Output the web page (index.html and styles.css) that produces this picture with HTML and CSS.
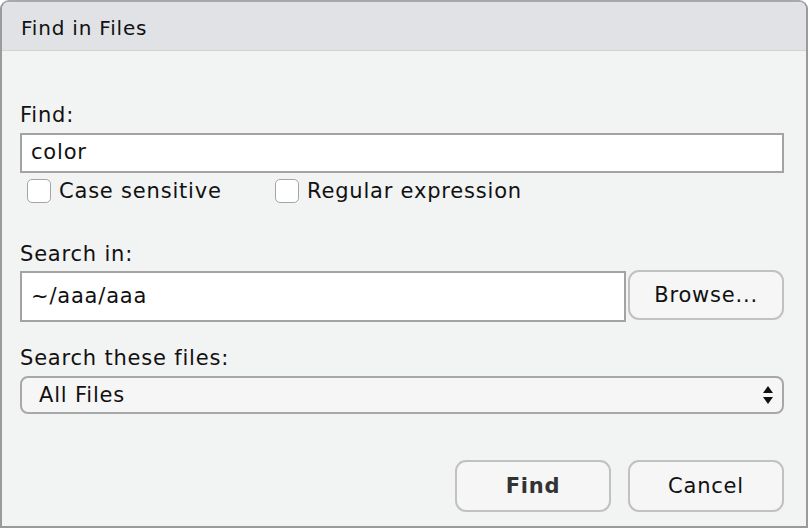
FILE: index.html
```html
<!DOCTYPE html>
<html lang="en">
<head>
  <meta charset="UTF-8" />
  <title>Find in Files</title>
  <link rel="stylesheet" href="styles.css">
</head>
<body>
  <div class="dialog">
    <div class="titlebar">Find in Files</div>
    <div class="content">
      <div class="label">Find:</div>
      <div class="field find-field">color</div>
      <div class="checks">
        <label class="check check-case"><span class="box"></span>Case sensitive</label>
        <label class="check"><span class="box"></span>Regular expression</label>
      </div>

      <div class="label label-search">Search in:</div>
      <div class="search-row">
        <div class="field path-field">~/aaa/aaa</div>
        <button class="btn browse">Browse...</button>
      </div>

      <div class="label label-files">Search these files:</div>
      <div class="select">
        <span>All Files</span>
        <svg class="arrows" width="12" height="22" viewBox="0 0 12 22">
          <path d="M6 2 L11 9 L1 9 Z" fill="#111"/>
          <path d="M1 13 L11 13 L6 20 Z" fill="#111"/>
        </svg>
      </div>

      <div class="actions">
        <button class="btn btn-find">Find</button>
        <button class="btn">Cancel</button>
      </div>
    </div>
  </div>
</body>
</html>
```

FILE: styles.css
```css
body {
  margin: 0;
  font-family: "DejaVu Sans", sans-serif;
  color: #111;
  background: #fff;
  letter-spacing: 0.8px;
}
.dialog {
  width: 808px;
  height: 528px;
  box-sizing: border-box;
  border: 2px solid #9a9a9a;
  border-top-color: #a8a8a8;
  border-radius: 9px 9px 0 0;
  background: #f2f3f3;
  overflow: hidden;
}
.titlebar {
  height: 49px;
  box-sizing: border-box;
  background: #e1e2e5;
  border-bottom: 1px solid #d2d3d5;
  padding: 14px 0 0 19px;
  font-size: 20px;
  line-height: 24px;
}
.content {
  padding: 50px 22px 0 18px;
}
.label {
  font-size: 21px;
  line-height: 28px;
  height: 26px;
}
.field {
  box-sizing: border-box;
  background: #fff;
  border: 2px solid #a3a3a3;
  font-size: 21px;
  padding-left: 9px;
}
.find-field {
  margin-top: 6px;
  height: 40px;
  line-height: 35px;
}
.checks {
  display: flex;
  margin-top: 5px;
  padding-left: 7px;
}
.check {
  display: flex;
  align-items: center;
  font-size: 21px;
  line-height: 26px;
}
.check-case {
  width: 248px;
}
.box {
  width: 22px;
  height: 22px;
  border: 1px solid #a5a5a5;
  border-radius: 5px;
  background: #fff;
  margin-right: 8px;
}
.label-search {
  margin-top: 36px;
}
.search-row {
  display: flex;
  gap: 2px;
  margin-top: 5px;
}
.path-field {
  width: 607px;
  height: 51px;
  line-height: 46px;
}
.btn {
  box-sizing: border-box;
  width: 156px;
  height: 52px;
  border: 2px solid #c1c1c1;
  border-radius: 11px;
  background: #f6f6f7;
  font-family: "DejaVu Sans", sans-serif;
  font-size: 21px;
  letter-spacing: 0.8px;
  color: #111;
  padding: 0;
}
.browse {
  height: 50px;
  margin-top: -1px;
}
.label-files {
  margin-top: 22px;
}
.select {
  display: flex;
  align-items: center;
  justify-content: space-between;
  box-sizing: border-box;
  height: 38px;
  margin-top: 6px;
  border: 2px solid #a8a8a8;
  border-radius: 8px;
  background: #f6f6f7;
  padding: 0 8px 0 17px;
  font-size: 21px;
}
.actions {
  display: flex;
  justify-content: flex-end;
  gap: 17px;
  margin-top: 46px;
}
.btn-find {
  font-weight: bold;
  color: #333;
}
```
